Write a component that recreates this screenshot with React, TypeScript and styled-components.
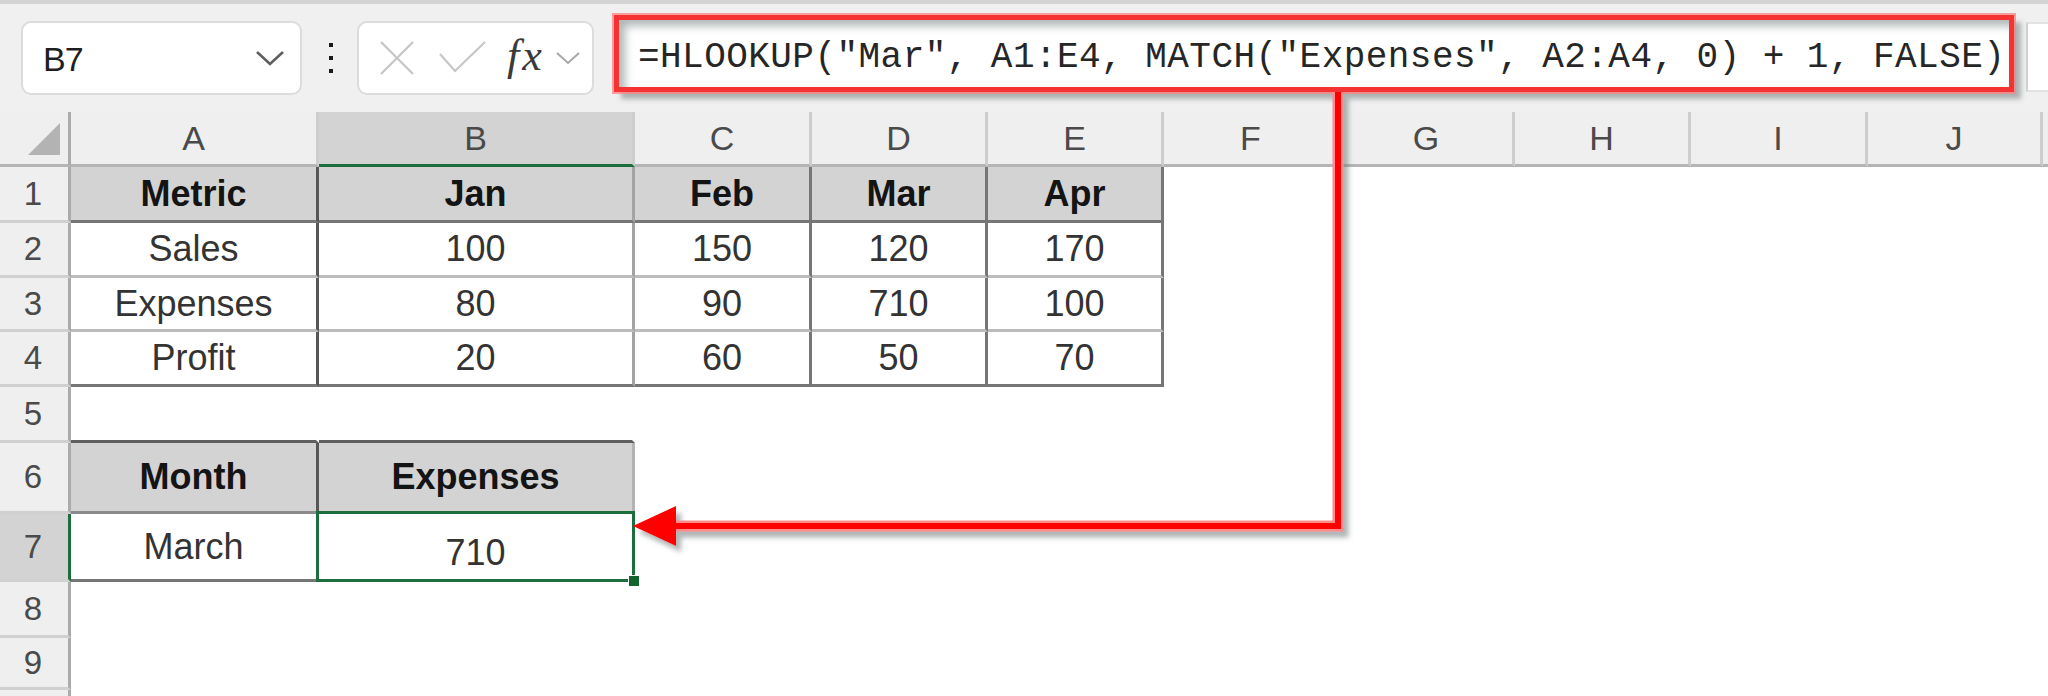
import React from "react";
import styled, { createGlobalStyle } from "styled-components";

const GlobalStyle = createGlobalStyle`
  html, body {
    margin: 0;
    padding: 0;
    background: #ffffff;
  }
  body {
    width: 2048px;
    height: 696px;
    overflow: hidden;
    font-family: "Liberation Sans", Arial, sans-serif;
  }
`;

const Page = styled.div`
  position: relative;
  width: 2048px;
  height: 696px;
  overflow: hidden;
  background: #ffffff;
`;

/* ---------- Formula toolbar ---------- */

const Toolbar = styled.div`
  height: 112px;
  box-sizing: border-box;
  background: #f0f0f0;
  border-top: 4px solid #d3d3d3;
  display: flex;
  align-items: flex-start;
  padding: 9px 0 0 21px;
`;

const NameBox = styled.div`
  margin-top: 8px;
  width: 281px;
  height: 74px;
  box-sizing: border-box;
  background: #ffffff;
  border: 2px solid #dcdcdc;
  border-radius: 10px;
  display: flex;
  align-items: center;
  justify-content: space-between;
  padding: 0 15px 0 20px;
`;

const NameText = styled.span`
  font-family: "Liberation Sans", Arial, sans-serif;
  font-size: 34px;
  color: #1f1f1f;
  letter-spacing: -1px;
  padding-top: 2px;
`;

const DotsSlot = styled.div`
  margin-top: 8px;
  width: 55px;
  height: 74px;
  display: flex;
  flex-direction: column;
  align-items: center;
  justify-content: center;
  gap: 9px;
  padding-left: 2px;
  box-sizing: border-box;
`;

const Dot = styled.span`
  width: 4px;
  height: 4px;
  background: #1a1a1a;
`;

const FxBox = styled.div`
  margin-top: 8px;
  width: 237px;
  height: 74px;
  box-sizing: border-box;
  background: #ffffff;
  border: 2px solid #dcdcdc;
  border-radius: 10px;
  display: flex;
  align-items: center;
  padding-left: 18px;
`;

const IconSlot = styled.span<{ $ml: number }>`
  display: flex;
  align-items: center;
  margin-left: ${(p) => p.$ml}px;
`;

const FxText = styled.span`
  font-family: "Liberation Serif", "Times New Roman", serif;
  font-style: italic;
  font-size: 44px;
  color: #3a3a3a;
  margin-left: 20px;
  letter-spacing: 3px;
  line-height: 1;
  padding-bottom: 4px;
`;

const FormulaBox = styled.div`
  margin-left: 20px;
  width: 1400px;
  height: 77px;
  margin-top: 2px;
  box-sizing: border-box;
  background: #ffffff;
  border: 5px solid #f53333;
  box-shadow: 0 0 0 2px rgba(255, 130, 130, 0.75),
    7px 7px 5px rgba(90, 100, 100, 0.45),
    inset 6px 6px 8px rgba(80, 95, 95, 0.45);
  display: flex;
  align-items: center;
  padding: 8px 0 0 19px;
`;

const FormulaText = styled.span`
  font-family: "Liberation Mono", "Courier New", monospace;
  font-size: 36px;
  letter-spacing: 0.45px;
  color: #262626;
  white-space: pre;
`;

const ExpandStub = styled.div`
  margin-left: 12px;
  margin-top: 9px;
  flex: 1;
  height: 66px;
  background: #ffffff;
  border-left: 2px solid #d0d0d0;
  border-top: 2px solid #e2e2e2;
  border-bottom: 2px solid #e2e2e2;
`;

/* ---------- Sheet grid ---------- */

const Sheet = styled.div`
  display: flex;
  flex-direction: column;
`;

const Row = styled.div<{ $h: number }>`
  display: flex;
  height: ${(p) => p.$h}px;
  flex: none;
`;

const Corner = styled.div`
  width: 71px;
  flex: none;
  box-sizing: border-box;
  background: #efefef;
  border-right: 3px solid #ababab;
  border-bottom: 3px solid #b5b5b5;
  display: flex;
  align-items: flex-end;
  justify-content: flex-end;
  padding: 0 8px 9px 0;
`;

const ColHeader = styled.div<{ $w: number; $active?: boolean }>`
  width: ${(p) => p.$w}px;
  flex: none;
  box-sizing: border-box;
  background: ${(p) => (p.$active ? "#d3d3d3" : "#efefef")};
  border-right: 3px solid #cdcdcd;
  border-bottom: 3px solid ${(p) => (p.$active ? "#1c6e3d" : "#b5b5b5")};
  display: flex;
  align-items: center;
  justify-content: center;
  font-family: "Liberation Sans", Arial, sans-serif;
  font-size: 34px;
  color: #4a4a4a;
  overflow: hidden;
`;

const RowHeader = styled.div<{ $active?: boolean }>`
  width: 71px;
  flex: none;
  box-sizing: border-box;
  background: ${(p) => (p.$active ? "#d3d3d3" : "#efefef")};
  border-right: 3px solid ${(p) => (p.$active ? "#1c6e3d" : "#ababab")};
  border-bottom: 3px solid #d0d0d0;
  display: flex;
  align-items: center;
  justify-content: center;
  font-family: "Liberation Sans", Arial, sans-serif;
  font-size: 33px;
  color: #4a4a4a;
  padding-right: 2px;
`;

const Cell = styled.div<{
  $w: number;
  $bg?: string;
  $bold?: boolean;
  $rb?: string;
  $bb?: string;
  $selected?: boolean;
  $dy?: number;
}>`
  position: relative;
  width: ${(p) => p.$w}px;
  flex: none;
  box-sizing: border-box;
  background: ${(p) => p.$bg || "#ffffff"};
  border-right: 3px solid ${(p) => p.$rb || "transparent"};
  border-bottom: 3px solid ${(p) => p.$bb || "transparent"};
  display: flex;
  align-items: center;
  justify-content: center;
  font-family: "Liberation Sans", Arial, sans-serif;
  font-size: 36px;
  font-weight: ${(p) => (p.$bold ? 700 : 400)};
  color: ${(p) => (p.$bold ? "#141414" : "#333333")};
  padding-top: ${(p) => p.$dy || 0}px;
  ${(p) =>
    p.$selected
      ? `
    &::after {
      content: "";
      position: absolute;
      top: -3px;
      left: -3px;
      right: -3px;
      bottom: -3px;
      border: 3px solid #1c6e3d;
      pointer-events: none;
    }
  `
      : ""}
`;

const FillHandle = styled.span`
  position: absolute;
  right: -8px;
  bottom: -8px;
  width: 10px;
  height: 10px;
  background: #12642f;
  border: 1px solid #ffffff;
  z-index: 2;
`;

const ArrowLayer = styled.svg`
  position: absolute;
  left: 0;
  top: 0;
  pointer-events: none;
`;

/* ---------- Data ---------- */

const WIDTHS = [248, 316, 177, 176, 176, 176, 175, 176, 177, 175, 20];
const LETTERS = ["A", "B", "C", "D", "E", "F", "G", "H", "I", "J", "K"];

type CellSpec = {
  text?: string;
  bg?: string;
  bold?: boolean;
  rb?: string;
  bb?: string;
  selected?: boolean;
  dy?: number;
};

type RowSpec = { n: number; h: number; active?: boolean; label?: boolean; cells: CellSpec[] };

const GREY = "#d3d3d3";
const DARK = "#767676";
const DARKER = "#575757";
const LIGHT = "#bcbcbc";

const tableRow = (vals: string[], bottom: string, header = false): CellSpec[] => {
  const rights = [DARKER, "#a3a3a3", DARK, DARK, DARK];
  return vals.map((v, i) => ({
    text: v,
    bg: header ? GREY : undefined,
    bold: header,
    rb: rights[i],
    bb: bottom,
  }));
};

const ROWS: RowSpec[] = [
  { n: 1, h: 56, cells: tableRow(["Metric", "Jan", "Feb", "Mar", "Apr"], DARK, true) },
  { n: 2, h: 55, cells: tableRow(["Sales", "100", "150", "120", "170"], LIGHT) },
  { n: 3, h: 54, cells: tableRow(["Expenses", "80", "90", "710", "100"], LIGHT) },
  { n: 4, h: 55, cells: tableRow(["Profit", "20", "60", "50", "70"], DARK) },
  { n: 5, h: 56, cells: [{ bb: "#5f5f5f" }, { bb: "#5f5f5f" }] },
  {
    n: 6,
    h: 71,
    cells: [
      { text: "Month", bg: GREY, bold: true, rb: DARKER, bb: "#8a8a8a" },
      { text: "Expenses", bg: GREY, bold: true, rb: "#b3b3b3", bb: "#8a8a8a" },
    ],
  },
  {
    n: 7,
    h: 68,
    active: true,
    cells: [
      { text: "March", rb: DARKER, bb: DARK },
      { text: "710", rb: DARK, bb: DARK, selected: true, dy: 12 },
    ],
  },
  { n: 8, h: 56, cells: [] },
  { n: 9, h: 52, cells: [] },
  { n: 10, h: 40, label: false, cells: [] },
];

/* ---------- Icons ---------- */

const Chevron = ({ color, w, h, sw }: { color: string; w: number; h: number; sw: number }) => (
  <svg width={w} height={h} viewBox={`0 0 ${w} ${h}`}>
    <polyline
      points={`2,2 ${w / 2},${h - 2} ${w - 2},2`}
      fill="none"
      stroke={color}
      strokeWidth={sw}
      strokeLinejoin="miter"
    />
  </svg>
);

const CancelIcon = () => (
  <svg width="36" height="36" viewBox="0 0 36 36">
    <path d="M2 2 L34 34 M34 2 L2 34" stroke="#c6c6c6" strokeWidth="2.2" fill="none" />
  </svg>
);

const CheckIcon = () => (
  <svg width="48" height="34" viewBox="0 0 48 34">
    <polyline points="1,13 16,30 46,1" stroke="#c6c6c6" strokeWidth="2.2" fill="none" />
  </svg>
);

const SelectAll = () => (
  <svg width="32" height="32" viewBox="0 0 32 32">
    <polygon points="32,0 32,32 0,32" fill="#b3b3b3" />
  </svg>
);

/* ---------- App ---------- */

export default function App() {
  return (
    <Page>
      <GlobalStyle />
      <Toolbar>
        <NameBox>
          <NameText>B7</NameText>
          <Chevron color="#5f5f5f" w={30} h={16} sw={2.6} />
        </NameBox>
        <DotsSlot>
          <Dot />
          <Dot />
          <Dot />
        </DotsSlot>
        <FxBox>
          <IconSlot $ml={2}>
            <CancelIcon />
          </IconSlot>
          <IconSlot $ml={24}>
            <CheckIcon />
          </IconSlot>
          <FxText>fx</FxText>
          <IconSlot $ml={10}>
            <Chevron color="#a8a8a8" w={26} h={14} sw={2} />
          </IconSlot>
        </FxBox>
        <FormulaBox>
          <FormulaText>=HLOOKUP("Mar", A1:E4, MATCH("Expenses", A2:A4, 0) + 1, FALSE)</FormulaText>
        </FormulaBox>
        <ExpandStub />
      </Toolbar>

      <Sheet>
        <Row $h={55}>
          <Corner>
            <SelectAll />
          </Corner>
          {WIDTHS.map((w, i) => (
            <ColHeader key={LETTERS[i]} $w={w} $active={i === 1}>
              {i < 10 ? LETTERS[i] : ""}
            </ColHeader>
          ))}
        </Row>
        {ROWS.map((r) => (
          <Row key={r.n} $h={r.h}>
            <RowHeader $active={r.active}>{r.label === false ? "" : r.n}</RowHeader>
            {WIDTHS.map((w, i) => {
              const c = r.cells[i] || {};
              return (
                <Cell
                  key={i}
                  $w={w}
                  $bg={c.bg}
                  $bold={c.bold}
                  $rb={c.rb}
                  $bb={c.bb}
                  $selected={c.selected}
                  $dy={c.dy}
                >
                  {c.text}
                  {c.selected ? <FillHandle /> : null}
                </Cell>
              );
            })}
          </Row>
        ))}
      </Sheet>

      <ArrowLayer width="2048" height="696" viewBox="0 0 2048 696">
        <defs>
          <filter id="arrowShadow" x="-5%" y="-5%" width="110%" height="120%">
            <feDropShadow dx="5" dy="6" stdDeviation="2.5" floodColor="#6f7777" floodOpacity="0.55" />
          </filter>
        </defs>
        <g filter="url(#arrowShadow)">
          <path d="M1338 92 V526 H668" fill="none" stroke="#ff8c8c" strokeWidth="11" strokeLinejoin="miter" />
          <path d="M1338 92 V526 H668" fill="none" stroke="#ff0000" strokeWidth="6" strokeLinejoin="miter" />
          <polygon points="633,526 676,506 676,546" fill="#ff0000" />
        </g>
      </ArrowLayer>
    </Page>
  );
}
